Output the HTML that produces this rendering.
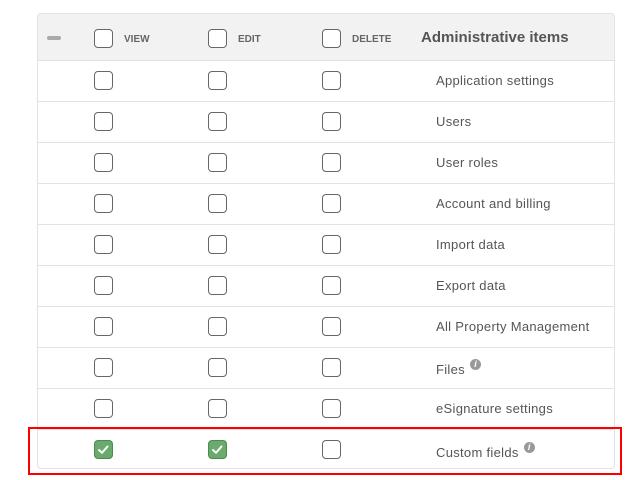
<!DOCTYPE html>
<html><head><style>
body{margin:0;width:633px;height:480px;background:#fff;font-family:"Liberation Sans",sans-serif;position:relative;overflow:hidden}
.tbl{position:absolute;left:37px;top:13px;width:578px;height:456px;border:1px solid #e2e2e2;border-radius:4px;box-sizing:border-box;overflow:hidden}
.hdr{position:absolute;left:0;top:0;width:100%;height:47px;background:#f2f2f2;border-bottom:1px solid #e0e0e0;box-sizing:border-box}
.row{position:absolute;left:0;width:100%;height:41px;border-bottom:1px solid #e2e2e2;box-sizing:border-box}
.cb{position:absolute;width:19px;height:19px;border:1px solid #666;border-radius:4px;background:#fff;box-sizing:border-box}
.cb.on{background:#6aaa6d;border-color:#4d8a50}
.a{left:56px;top:10px}.b{left:170px;top:10px}.c{left:284px;top:10px}
.lbl{position:absolute;left:398px;top:12px;font-size:13px;letter-spacing:0.3px;color:#555}
.h{position:absolute;font-size:10px;font-weight:bold;color:#666}
.i{display:inline-block;width:11px;height:11px;border-radius:50%;background:#999;color:#fff;font-size:9px;font-weight:bold;text-align:center;line-height:11px;font-style:italic;vertical-align:7px;margin-left:5px;letter-spacing:0}
</style></head><body>
<div class="tbl">
<div class="hdr">
<div style="position:absolute;left:9px;top:22px;width:14px;height:4px;background:#aaa;border-radius:2px"></div>
<div class="cb" style="left:56px;top:15px"></div><div class="h" style="left:86px;top:20px">VIEW</div>
<div class="cb" style="left:170px;top:15px"></div><div class="h" style="left:200px;top:20px">EDIT</div>
<div class="cb" style="left:284px;top:15px"></div><div class="h" style="left:314px;top:20px">DELETE</div>
<div style="position:absolute;left:383px;top:15px;font-size:15px;font-weight:bold;color:#555">Administrative items</div>
</div>
<div class="row" style="top:47px"><div class="cb a"></div><div class="cb b"></div><div class="cb c"></div><div class="lbl">Application settings</div></div>
<div class="row" style="top:88px"><div class="cb a"></div><div class="cb b"></div><div class="cb c"></div><div class="lbl">Users</div></div>
<div class="row" style="top:129px"><div class="cb a"></div><div class="cb b"></div><div class="cb c"></div><div class="lbl">User roles</div></div>
<div class="row" style="top:170px"><div class="cb a"></div><div class="cb b"></div><div class="cb c"></div><div class="lbl">Account and billing</div></div>
<div class="row" style="top:211px"><div class="cb a"></div><div class="cb b"></div><div class="cb c"></div><div class="lbl">Import data</div></div>
<div class="row" style="top:252px"><div class="cb a"></div><div class="cb b"></div><div class="cb c"></div><div class="lbl">Export data</div></div>
<div class="row" style="top:293px"><div class="cb a"></div><div class="cb b"></div><div class="cb c"></div><div class="lbl">All Property Management</div></div>
<div class="row" style="top:334px"><div class="cb a"></div><div class="cb b"></div><div class="cb c"></div><div class="lbl" style="top:11px">Files<span class="i">i</span></div></div>
<div class="row" style="top:375px"><div class="cb a"></div><div class="cb b"></div><div class="cb c"></div><div class="lbl">eSignature settings</div></div>
<div class="row" style="top:416px;border-bottom:none"><div class="cb a on"><svg width="19" height="19" viewBox="0 0 19 19" style="position:absolute;left:-1px;top:-1px"><path d="M5 10 L8 12.8 L13.5 6.5" stroke="#fff" stroke-width="2" fill="none" stroke-linecap="round" stroke-linejoin="round"/></svg></div><div class="cb b on"><svg width="19" height="19" viewBox="0 0 19 19" style="position:absolute;left:-1px;top:-1px"><path d="M5 10 L8 12.8 L13.5 6.5" stroke="#fff" stroke-width="2" fill="none" stroke-linecap="round" stroke-linejoin="round"/></svg></div><div class="cb c"></div><div class="lbl" style="top:12px">Custom fields<span class="i">i</span></div></div>
</div>
<div style="position:absolute;left:28px;top:427px;width:594px;height:48px;border:2px solid #f00;box-sizing:border-box"></div>
</body></html>
